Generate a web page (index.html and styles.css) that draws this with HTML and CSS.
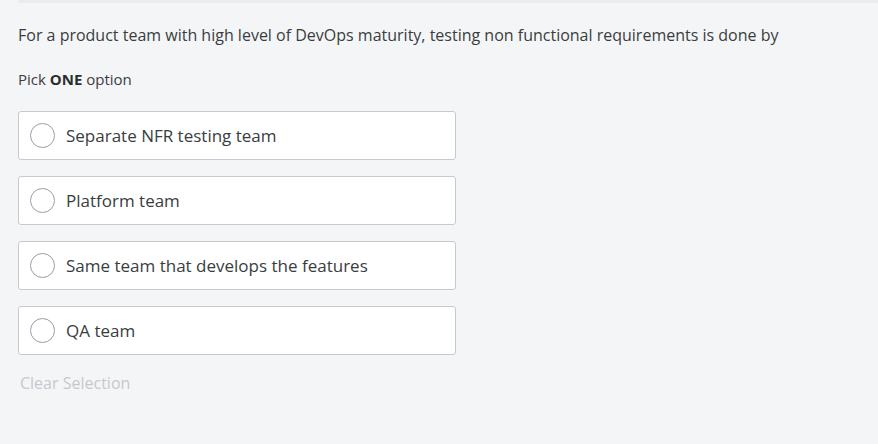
FILE: index.html
```html
<!DOCTYPE html>
<html>
<head>
<meta charset="utf-8">
<link rel="stylesheet" href="styles.css">
</head>
<body>
<div class="topbar"></div>
<main class="question">
  <p class="prompt">For a product team with high level of DevOps maturity, testing non functional requirements is done by</p>
  <p class="hint">Pick <strong>ONE</strong> option</p>
  <div class="options">
    <label class="option"><span class="radio"></span><span class="label">Separate NFR testing team</span></label>
    <label class="option"><span class="radio"></span><span class="label">Platform team</span></label>
    <label class="option"><span class="radio"></span><span class="label">Same team that develops the features</span></label>
    <label class="option"><span class="radio"></span><span class="label">QA team</span></label>
  </div>
  <div class="clear">Clear Selection</div>
</main>
</body>
</html>
```
FILE: styles.css
```css
html, body {
  margin: 0;
  padding: 0;
  background: #f4f5f7;
  font-family: "Open Sans", "Liberation Sans", sans-serif;
  color: #3a3d40;
}
.topbar {
  margin-left: 18px;
  height: 3px;
  background: #ebecef;
}
.question {
  padding: 0 18px;
}
.prompt {
  margin: 21px 0 0;
  font-size: 16px;
  line-height: 22px;
}
.hint {
  margin: 23px 0 0;
  font-size: 15px;
  line-height: 20px;
}
.hint strong {
  font-weight: 700;
  color: #2b2e31;
}
.options {
  margin-top: 22px;
  width: 438px;
  display: flex;
  flex-direction: column;
  gap: 16px;
}
.option {
  display: flex;
  align-items: center;
  height: 49px;
  box-sizing: border-box;
  border: 1px solid #c6cacf;
  border-radius: 3px;
  background: #ffffff;
  padding-left: 11px;
}
.radio {
  width: 25px;
  height: 25px;
  box-sizing: border-box;
  border: 1.5px solid #9a9ea3;
  border-radius: 50%;
  flex: none;
}
.label {
  margin-left: 11px;
  font-size: 17px;
  color: #3a3d40;
}
.clear {
  margin-top: 18px;
  padding-left: 2px;
  font-size: 16px;
  line-height: 20px;
  color: #c5c9ce;
}
```
